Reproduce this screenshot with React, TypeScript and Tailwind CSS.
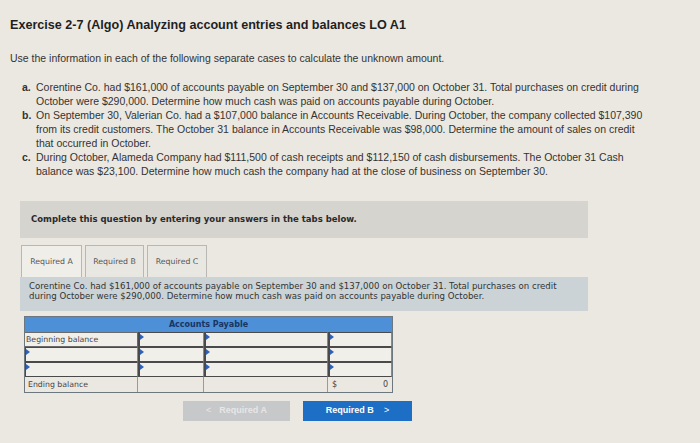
import React from 'react'

// small blue marker in the corner of an input cell
function Marker() {
  return <span className="absolute left-0 top-[1px] h-0 w-0 border-y-[3px] border-l-[4px] border-y-transparent border-l-[#2e62b8]" />
}

function InputCell({ children, first }: { children?: React.ReactNode; first?: boolean }) {
  return (
    <div
      className={`relative h-[15px] bg-[#f1efea] border-y border-[#4a4a4a] ${first ? 'border-l' : 'border-l-2'} border-r border-r-[#8a8a8a] text-[8px] leading-[13px] px-[2px]`}
    >
      <Marker />
      {children}
    </div>
  )
}

export default function App() {
  const verdana = { fontFamily: '"DejaVu Sans", Verdana, sans-serif' }
  const sans = { fontFamily: '"Liberation Sans", Arial, sans-serif' }

  return (
    <div className="min-h-screen w-full bg-[#ebe8e1] pl-[10px] pt-[16px] text-[#2a2a2a]" style={sans}>
      <h1 className="text-[12.6px] font-bold leading-[18px] text-[#1f1f1f]">
        Exercise 2-7 (Algo) Analyzing account entries and balances LO A1
      </h1>

      <p className="mt-[17px] text-[10.5px] leading-[14px] text-[#333]">
        Use the information in each of the following separate cases to calculate the unknown amount.
      </p>

      <ol className="mt-[15px] ml-[12px] text-[10.5px] leading-[14px] text-[#333] whitespace-nowrap">
        <li className="flex">
          <span className="w-[14px] font-bold">a.</span>
          <span>
            Corentine Co. had $161,000 of accounts payable on September 30 and $137,000 on October 31. Total purchases on credit during
            <br />
            October were $290,000. Determine how much cash was paid on accounts payable during October.
          </span>
        </li>
        <li className="flex">
          <span className="w-[14px] font-bold">b.</span>
          <span>
            On September 30, Valerian Co. had a $107,000 balance in Accounts Receivable. During October, the company collected $107,390
            <br />
            from its credit customers. The October 31 balance in Accounts Receivable was $98,000. Determine the amount of sales on credit
            <br />
            that occurred in October.
          </span>
        </li>
        <li className="flex">
          <span className="w-[14px] font-bold">c.</span>
          <span>
            During October, Alameda Company had $111,500 of cash receipts and $112,150 of cash disbursements. The October 31 Cash
            <br />
            balance was $23,100. Determine how much cash the company had at the close of business on September 30.
          </span>
        </li>
      </ol>

      <div className="mt-[23px] ml-[10px] w-[568px] h-[37px] bg-[#d6d4cf] flex items-center pl-[11px]">
        <span className="text-[8.5px] font-bold text-[#2a2a2a]" style={verdana}>
          Complete this question by entering your answers in the tabs below.
        </span>
      </div>

      <div className="mt-[7px] ml-[11px] flex gap-[3px] h-[32px] text-[7.8px] text-[#555]" style={verdana}>
        <div className="w-[61px] bg-[#f0eee9] border border-b-0 border-[#b9b7b2] flex items-center justify-center">Required A</div>
        <div className="w-[59px] bg-[#e9e7e2] border border-b-0 border-[#b9b7b2] flex items-center justify-center">Required B</div>
        <div className="w-[60px] bg-[#e9e7e2] border border-b-0 border-[#b9b7b2] flex items-center justify-center">Required C</div>
      </div>

      <div className="ml-[10px] w-[568px] h-[34px] bg-[#cbd3d6] pl-[9px] pt-[4px] text-[8.6px] leading-[10px] text-[#333] whitespace-nowrap" style={verdana}>
        Corentine Co. had $161,000 of accounts payable on September 30 and $137,000 on October 31. Total purchases on credit
        <br />
        during October were $290,000. Determine how much cash was paid on accounts payable during October.
      </div>

      <div className="mt-[5px] ml-[14px] w-[369px] border border-[#6d7780]" style={verdana}>
        <div className="h-[15px] bg-[#4d90d8] flex items-center justify-center text-[8px] font-bold text-[#1a3561]">
          Accounts Payable
        </div>
        <div className="grid grid-cols-[113px_66px_124px_64px] text-[#444]">
          <div className="h-[15px] border-y border-r border-[#6a6a6a] bg-[#f1efea] text-[7.8px] leading-[13px] pl-[1px]">Beginning balance</div>
          <InputCell />
          <InputCell />
          <InputCell />

          <InputCell first />
          <InputCell />
          <InputCell />
          <InputCell />

          <InputCell first />
          <InputCell />
          <InputCell />
          <InputCell />

          <div className="h-[15px] border-r border-[#9a9a9a] text-[7.8px] leading-[15px] pl-[3px]">Ending balance</div>
          <div className="h-[15px] border-r border-[#9a9a9a]" />
          <div className="h-[15px] border-r border-[#9a9a9a]" />
          <div className="h-[15px] flex items-center justify-between px-[4px] text-[8px]">
            <span>$</span>
            <span>0</span>
          </div>
        </div>
      </div>

      <div className="mt-[8px] flex text-[9px] font-bold">
        <div className="ml-[173px] w-[107px] h-[20px] bg-[#c6c8ca] text-[#e6e6e6] flex items-center justify-center gap-[8px]">
          <span className="font-normal">&lt;</span>
          <span>Required A</span>
        </div>
        <div className="ml-[13px] w-[109px] h-[20px] bg-[#1c6fc5] text-white flex items-center justify-center gap-[10px]">
          <span>Required B</span>
          <span className="font-normal">&gt;</span>
        </div>
      </div>
    </div>
  )
}
